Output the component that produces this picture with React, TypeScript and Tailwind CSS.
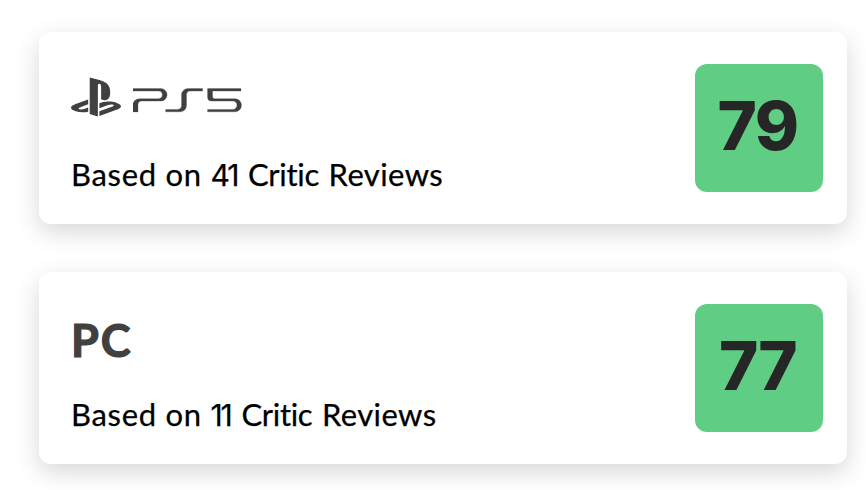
import type { ReactNode } from "react";
import { SiPlaystation, SiPlaystation5 } from "react-icons/si";

interface ScoreCardProps {
  platform: ReactNode;
  reviews: number;
  score: number;
}

function ScoreCard({ platform, reviews, score }: ScoreCardProps) {
  return (
    <div className="flex h-48 justify-between rounded-xl bg-white pt-8 pr-6 pl-8 shadow-[0_8px_24px_rgba(0,0,0,0.16)]">
      <div className="flex flex-col">
        <div className="flex h-[72px] items-center text-[#404040]">{platform}</div>
        <p className="mt-[15px] text-[31px] leading-[46px] whitespace-nowrap text-black [font-variant-ligatures:none] [-webkit-text-stroke:0.25px_black]">
          <span className="tracking-[0.7px]">Based on </span>
          <span className="font-['Inter',sans-serif] text-[30px] tracking-[-2px] [-webkit-text-stroke:0.25px_black]">
            {reviews}
          </span>
          <span className="ml-[3px] tracking-[-0.3px]"> Critic </span>
          <span className="ml-[2px] tracking-[0.4px]">Reviews</span>
        </p>
      </div>
      <div className="flex size-32 items-center justify-center rounded-xl bg-[#5fcd84] pr-[3px] pb-[5px] font-['Inter',sans-serif] text-[67px] leading-none font-extrabold tracking-[-1.5px] text-[#262626]">
        {score}
      </div>
    </div>
  );
}

export default function App() {
  return (
    <main className="flex h-[490px] flex-col gap-12 overflow-hidden bg-white pt-8 pr-[19px] pl-[39px] font-['Lato',sans-serif]">
      <ScoreCard
        platform={
          <div className="flex items-center gap-3 pb-1">
            <SiPlaystation className="mb-[3px] size-[50px]" />
            <SiPlaystation5 className="mt-[3px] size-[108.5px] translate-y-px [stroke-width:0.06]" />
          </div>
        }
        reviews={41}
        score={79}
      />
      <ScoreCard
        platform={
          <h2 className="text-[45px] leading-none font-bold tracking-[2px] [-webkit-text-stroke:1.2px_#404040]">
            PC
          </h2>
        }
        reviews={11}
        score={77}
      />
    </main>
  );
}
